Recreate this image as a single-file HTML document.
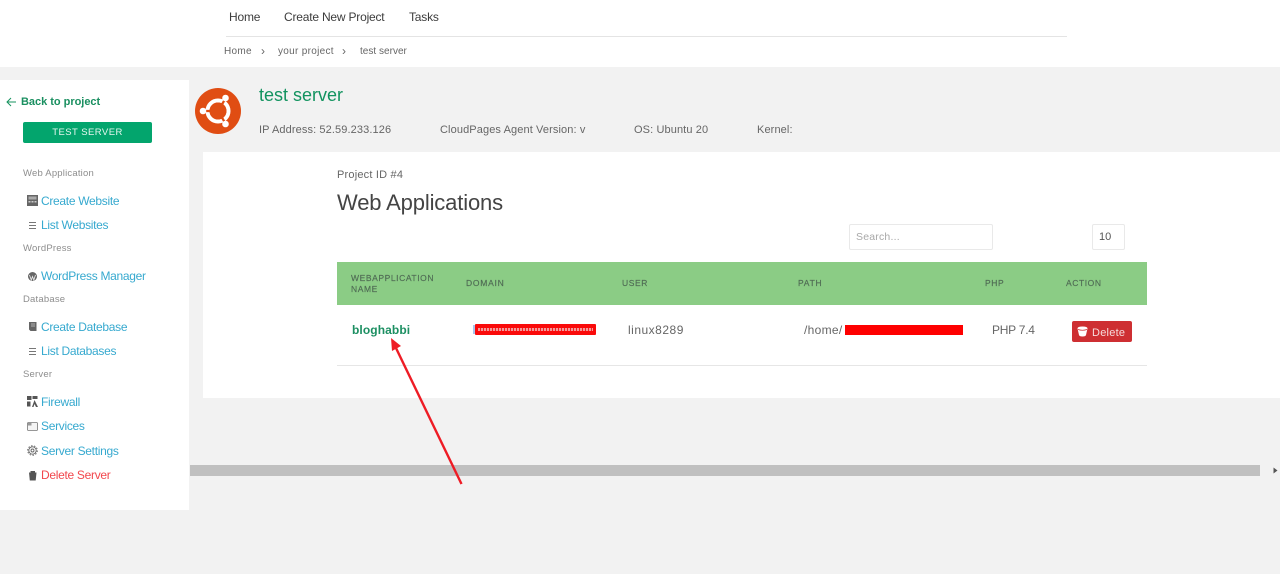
<!DOCTYPE html>
<html lang="en">
<head>
<meta charset="utf-8">
<title>Web Applications</title>
<style>
html,body{margin:0;padding:0;width:1280px;height:574px;overflow:hidden;background:#f2f2f2;font-family:"Liberation Sans",sans-serif;color:#555}
.a{position:absolute;white-space:nowrap;line-height:16px}
.box{position:absolute}
.nav{font-size:12px;color:#3c3c3c;letter-spacing:-.2px;top:9px}
.bc{font-size:10px;color:#666;letter-spacing:.3px;top:44px}
.sec{font-size:9.5px;color:#8d8d8d;left:23px;letter-spacing:.2px}
.lnk{font-size:12px;color:#36a9cf;left:41px;letter-spacing:-.3px}
.ic{position:absolute;left:27px;width:11px;height:11px}
.meta{font-size:11px;color:#666;top:122px;letter-spacing:.11px}
.th{font-size:8.5px;color:#4f6b54;letter-spacing:.58px;line-height:11px;-webkit-text-stroke:.15px #4f6b54}
.td{font-size:12px;color:#666;letter-spacing:.3px;top:322px}
</style>
</head>
<body>
<div class="box" style="left:0;top:0;width:1280px;height:67px;background:#fff"></div>
<div class="a nav" style="left:229px">Home</div>
<div class="a nav" style="left:284px">Create New Project</div>
<div class="a nav" style="left:409px">Tasks</div>
<div class="box" style="left:226px;top:36px;width:841px;height:1px;background:#e4e4e4"></div>
<div class="a bc" style="left:224px;top:44px">Home</div>
<div class="a bc" style="left:261px;top:43px;font-size:12px">›</div>
<div class="a bc" style="left:278px;top:44px">your project</div>
<div class="a bc" style="left:342px;top:43px;font-size:12px">›</div>
<div class="a bc" style="left:360px;top:44px;letter-spacing:.02px">test server</div>

<div class="box" style="left:0;top:80px;width:189px;height:430px;background:#fff"></div>
<svg class="box" style="left:6px;top:97px" width="11" height="11" viewBox="0 0 11 11" fill="none" stroke="#17935f" stroke-width="1"><path d="M10 5H1M5 1 1 5l4 4"/></svg>
<div class="a" style="left:21px;top:94px;font-size:11px;font-weight:700;color:#1a8f60;letter-spacing:-.02px">Back to project</div>
<div class="box" style="left:23px;top:122px;width:129px;height:21px;background:#03a56d;border-radius:2px;color:#e6f7ef;font-size:9.5px;line-height:21px;text-align:center;letter-spacing:.45px">TEST SERVER</div>

<div class="a sec" style="top:166px">Web Application</div>
<svg class="ic" style="top:195px" viewBox="0 0 11 11"><rect width="11" height="11" fill="#666"/><rect x="1.5" y="1.5" width="8" height="3" fill="#aaa"/><rect x="1.5" y="6" width="2" height="1.5" fill="#ccc"/><rect x="4.5" y="6" width="2" height="1.5" fill="#ccc"/><rect x="7.5" y="6" width="2" height="1.5" fill="#ccc"/></svg>
<div class="a lnk" style="top:193px">Create Website</div>
<svg class="ic" style="top:220px" viewBox="0 0 11 11" stroke="#777" stroke-width="1"><path d="M2 2.500h7M2 5.500h7M2 8.500h7"/></svg>
<div class="a lnk" style="top:217px">List Websites</div>
<div class="a sec" style="top:241px">WordPress</div>
<svg class="ic" style="top:271px" viewBox="0 0 11 11"><circle cx="5.500" cy="5.500" r="4.500" fill="#666"/><path d="M2.500 4 4.300 9 5.500 5.500 6.800 9 8.500 4" fill="none" stroke="#eee" stroke-width=".8"/></svg>
<div class="a lnk" style="top:268px">WordPress Manager</div>
<div class="a sec" style="top:292px">Database</div>
<svg class="ic" style="top:321px" viewBox="0 0 11 11"><path d="M2 1h7.500v9H3.500L2 8.500z" fill="#666"/><path d="M4 3h4M4 5h4" stroke="#ccc" stroke-width=".8"/></svg>
<div class="a lnk" style="top:319px">Create Datebase</div>
<svg class="ic" style="top:346px" viewBox="0 0 11 11" stroke="#777" stroke-width="1"><path d="M2 2.500h7M2 5.500h7M2 8.500h7"/></svg>
<div class="a lnk" style="top:343px">List Databases</div>
<div class="a sec" style="top:367px">Server</div>
<svg class="ic" style="top:396px" viewBox="0 0 11 11"><rect x="0" y="0" width="4.500" height="4" fill="#555"/><rect x="5.500" y="0" width="5" height="3" fill="#555"/><rect x="0" y="5.500" width="3.500" height="5" fill="#555"/><path d="M5 11 7.500 4 11 11H9L7.500 8 6.500 11z" fill="#555"/></svg>
<div class="a lnk" style="top:394px">Firewall</div>
<svg class="ic" style="top:421px" viewBox="0 0 11 11"><rect x=".5" y="1.500" width="10" height="8" rx="1" fill="#f4f4f4" stroke="#777" stroke-width=".8"/><rect x="1" y="2" width="3.500" height="2.500" fill="#999"/></svg>
<div class="a lnk" style="top:418px">Services</div>
<svg class="ic" style="top:445px" viewBox="0 0 11 11" fill="none" stroke="#666"><circle cx="5.500" cy="5.500" r="1.500" stroke-width=".9"/><circle cx="5.500" cy="5.500" r="3.700" stroke-width=".9"/><circle cx="5.500" cy="5.500" r="4.800" stroke-width="1" stroke-dasharray="1.500 1.500"/></svg>
<div class="a lnk" style="top:443px">Server Settings</div>
<svg class="ic" style="top:470px" viewBox="0 0 11 11"><path d="M2 2.500h7.500L8.700 10.500H2.800z" fill="#555"/><rect x="3.500" y="1" width="4.500" height="1.500" fill="#555"/></svg>
<div class="a lnk" style="top:467px;color:#f2474d">Delete Server</div>

<svg class="box" style="left:195px;top:88px" width="46" height="46" viewBox="0 0 46 46">
<circle cx="23" cy="23" r="23" fill="#e04d13"/>
<circle cx="23" cy="23" r="10.500" fill="none" stroke="#fff" stroke-width="4"/>
<g stroke="#e04d13" stroke-width="2.200"><path d="M23 23 8 23M23 23 30.500 10.500M23 23 30.500 35.500"/></g>
<circle cx="23" cy="23" r="8.500" fill="#e04d13"/>
<circle cx="8" cy="23" r="3.300" fill="#fff"/>
<circle cx="30.500" cy="10" r="3.300" fill="#fff"/>
<circle cx="30.500" cy="36" r="3.300" fill="#fff"/>
</svg>
<div class="a" style="left:259px;top:85px;font-size:18px;line-height:20px;color:#12935f;letter-spacing:0">test server</div>
<div class="a meta" style="left:259px">IP Address: 52.59.233.126</div>
<div class="a meta" style="left:440px">CloudPages Agent Version: v</div>
<div class="a meta" style="left:634px">OS: Ubuntu 20</div>
<div class="a meta" style="left:757px">Kernel:</div>

<div class="box" style="left:203px;top:152px;width:1077px;height:246px;background:#fff"></div>
<div class="a" style="left:337px;top:167px;font-size:11px;color:#666;letter-spacing:.2px">Project ID #4</div>
<div class="a" style="left:337px;top:190px;font-size:22px;line-height:26px;color:#444;letter-spacing:-.15px">Web Applications</div>
<div class="box" style="left:849px;top:224px;width:142px;height:24px;border:1px solid #e9e9e9;border-radius:2px;background:#fff;font-size:10.500px;line-height:25px;color:#a8a8a8;letter-spacing:.2px;text-indent:6px">Search...</div>
<div class="box" style="left:1092px;top:224px;width:31px;height:24px;border:1px solid #e9e9e9;border-radius:2px;background:#fff;font-size:11px;line-height:25px;color:#555;text-indent:6px">10</div>

<div class="box" style="left:337px;top:262px;width:810px;height:43px;background:#8bcc85"></div>
<div class="a th" style="left:351px;top:273px">WEBAPPLICATION<br>NAME</div>
<div class="a th" style="left:466px;top:278px;letter-spacing:.75px">DOMAIN</div>
<div class="a th" style="left:622px;top:278px">USER</div>
<div class="a th" style="left:798px;top:278px;letter-spacing:.75px">PATH</div>
<div class="a th" style="left:985px;top:278px">PHP</div>
<div class="a th" style="left:1066px;top:278px">ACTION</div>

<div class="a" style="left:352px;top:322px;font-size:12px;font-weight:700;color:#1c8f62;letter-spacing:.1px">bloghabbi</div>
<div class="box" style="left:473px;top:325px;width:2px;height:9px;background:#a9c4ea"></div>
<div class="box" style="left:475px;top:324px;width:121px;height:11px;background:#fa0a0a;border-radius:1px"></div>
<div class="box" style="left:478px;top:328px;width:115px;height:3px;background:repeating-linear-gradient(90deg,#f49a9a 0 2px,#f52020 2px 3px)"></div>
<div class="a td" style="left:628px;letter-spacing:.5px">linux8289</div>
<div class="a td" style="left:804px">/home/</div>
<div class="box" style="left:845px;top:325px;width:118px;height:10px;background:#fe0000"></div>
<div class="a td" style="left:992px;letter-spacing:-.25px">PHP 7.4</div>
<div class="box" style="left:1072px;top:321px;width:60px;height:21px;background:#ce2f32;border-radius:2px"></div>
<svg class="box" style="left:1077px;top:326px" width="11" height="11" viewBox="0 0 11 11"><path d="M.5 2.500Q.5 .5 5.500 .5T10.500 2.500L9 9Q8.700 10.500 5.500 10.500T2 9z" fill="#fff"/><path d="M1 3.500Q5.500 5 10 3.500" stroke="#ce2f32" stroke-width=".8" fill="none"/></svg>
<div class="a" style="left:1092px;top:325px;font-size:11px;color:#f6dcdc;letter-spacing:.25px">Delete</div>
<div class="box" style="left:337px;top:365px;width:810px;height:1px;background:#e6e6e6"></div>

<div class="box" style="left:190px;top:465px;width:1070px;height:11px;background:#c0c0c0"></div>
<svg class="box" style="left:1272px;top:467px" width="6" height="7" viewBox="0 0 6 7"><path d="M1.500 .5 5.500 3.500 1.500 6.500z" fill="#555"/></svg>

<svg class="box" style="left:380px;top:330px" width="90" height="160" viewBox="380 330 90 160">
<path d="M461.500 484 395.500 347" stroke="#ee1c25" stroke-width="2.400" fill="none"/>
<path d="M391 338 401 346 392 351z" fill="#ee1c25"/>
</svg>
</body>
</html>
